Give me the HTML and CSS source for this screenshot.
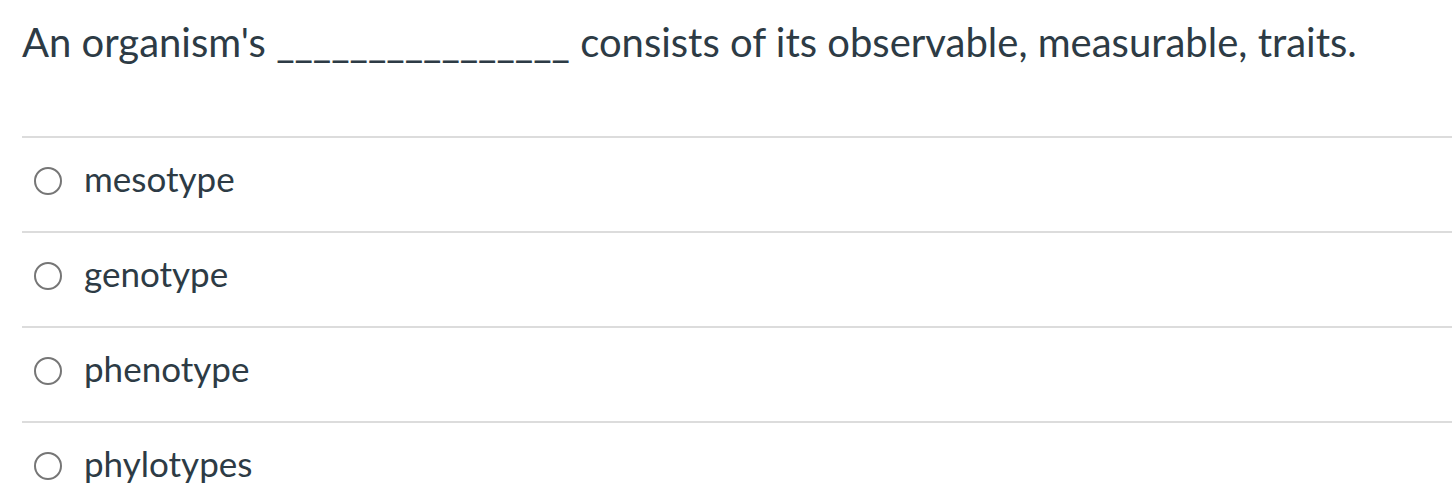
FILE: index.html
```html
<!DOCTYPE html>
<html>
<head>
<meta charset="utf-8">
<link rel="stylesheet" href="styles.css">
</head>
<body>
<div class="quiz">
  <p class="question">An organism's ________________ consists of its observable, measurable, traits.</p>
  <div class="answers">
    <label class="answer"><span class="radio"></span><span class="label">mesotype</span></label>
    <label class="answer"><span class="radio"></span><span class="label">genotype</span></label>
    <label class="answer"><span class="radio"></span><span class="label">phenotype</span></label>
    <label class="answer"><span class="radio"></span><span class="label">phylotypes</span></label>
  </div>
</div>
</body>
</html>
```
FILE: styles.css
```css
html, body {
  margin: 0;
  padding: 0;
  background: #fff;
}
body {
  font-family: Lato, "Liberation Sans", sans-serif;
  color: #2d3b45;
  overflow: hidden;
}
.quiz {
  padding-left: 22px;
}
.question {
  margin: 0;
  padding-top: 18px;
  font-size: 40px;
  line-height: 48px;
  height: 118px;
}
.answers {
  display: flex;
  flex-direction: column;
}
.answer {
  display: flex;
  align-items: center;
  border-top: 2px solid #dcdcdc;
  height: 85px;
  padding-bottom: 8px;
  padding-left: 12px;
}
.radio {
  width: 24px;
  height: 24px;
  border: 2.5px solid #767676;
  border-radius: 50%;
  flex: none;
}
.label {
  margin-left: 22px;
  margin-bottom: 6px;
  font-size: 35px;
  line-height: 42px;
}
```
